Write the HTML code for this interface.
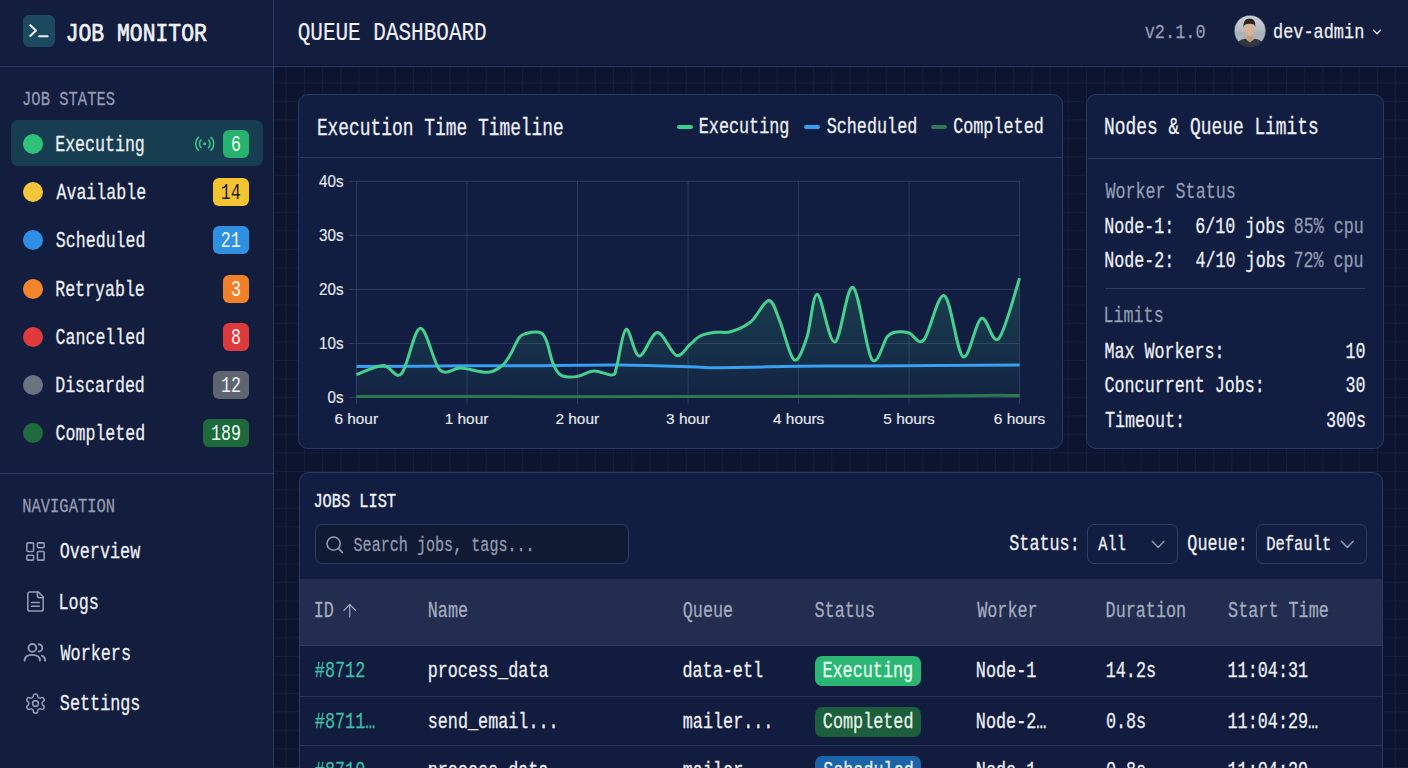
<!DOCTYPE html>
<html><head><meta charset="utf-8"><title>Job Monitor - Queue Dashboard</title>
<style>
html,body{margin:0;padding:0;}
body{width:1408px;height:768px;overflow:hidden;position:relative;background:#0d1430;font-family:"Liberation Mono",monospace;}
.t{position:absolute;white-space:pre;}
.b{position:absolute;}
</style></head><body>
<div class="b" style="left:274px;top:66px;width:1134px;height:702px;background-color:#0d1430;background-image:linear-gradient(to right,#151d3b 1px,transparent 1px),linear-gradient(to bottom,#151d3b 1px,transparent 1px);background-size:18.203px 18.5px;background-position:11.7px 16.4px"></div>
<div class="b" style="left:0.00px;top:0.00px;width:273.00px;height:768.00px;background:#131d3e;border-radius:0px;"></div>
<div class="b" style="left:273.00px;top:0.00px;width:1.00px;height:768.00px;background:#2a3a64;border-radius:0px;"></div>
<div class="b" style="left:274.00px;top:0.00px;width:1134.00px;height:65.00px;background:#131d3e;border-radius:0px;"></div>
<div class="b" style="left:0.00px;top:65.60px;width:1408.00px;height:1.00px;background:#2a3a64;border-radius:0px;"></div>
<div class="b" style="left:23.40px;top:15.30px;width:31.80px;height:31.80px;background:#1b4a60;border-radius:6px;"></div>
<svg class="b" style="left:23.40px;top:15.30px;" width="32" height="32" viewBox="0 0 32 32"><path d="M7.3 10.2 L13 15.6 L7.3 21" fill="none" stroke="#e8f4f8" stroke-width="2.1" stroke-linecap="round" stroke-linejoin="round"/><path d="M16.2 21.2 H24.6" stroke="#e8f4f8" stroke-width="2.1" stroke-linecap="round"/></svg>
<div class="t" style="left:65.66px;top:24.61px;font-family:'Liberation Mono', monospace;font-size:21.4px;line-height:21.4px;color:#eef1f7;font-weight:400;transform:scaleY(1.22);transform-origin:0 16.39px;-webkit-text-stroke:0.6px #eef1f7;">JOB MONITOR</div>
<div class="t" style="left:22.07px;top:94.13px;font-family:'Liberation Mono', monospace;font-size:15.5px;line-height:15.5px;color:#939cb1;font-weight:400;transform:scaleY(1.32);transform-origin:0 11.87px;-webkit-text-stroke:0.2px #939cb1;">JOB STATES</div>
<div class="b" style="left:11.00px;top:120.40px;width:251.50px;height:45.80px;background:#173d50;border-radius:7px;"></div>
<div class="b" style="left:23px;top:133.50px;width:20px;height:20px;border-radius:50%;background:#2fc27a"></div>
<div class="t" style="left:55.19px;top:138.68px;font-family:'Liberation Mono', monospace;font-size:16.6px;line-height:16.6px;color:#eef1f7;font-weight:400;transform:scaleY(1.3);transform-origin:0 12.72px;-webkit-text-stroke:0.2px #eef1f7;">Executing</div>
<div class="b" style="left:223.00px;top:129.50px;width:26.00px;height:28.00px;background:#27b36f;border-radius:6px;"></div>
<div class="t" style="left:230.95px;top:138.68px;font-family:'Liberation Mono', monospace;font-size:16.6px;line-height:16.6px;color:#eafff2;font-weight:400;transform:scaleY(1.3);transform-origin:0 12.72px;">6</div>
<div class="b" style="left:23px;top:182.00px;width:20px;height:20px;border-radius:50%;background:#f5c53a"></div>
<div class="t" style="left:56.50px;top:187.18px;font-family:'Liberation Mono', monospace;font-size:16.6px;line-height:16.6px;color:#eef1f7;font-weight:400;transform:scaleY(1.3);transform-origin:0 12.72px;-webkit-text-stroke:0.2px #eef1f7;">Available</div>
<div class="b" style="left:213.00px;top:178.00px;width:36.00px;height:28.00px;background:#f4c430;border-radius:6px;"></div>
<div class="t" style="left:220.86px;top:187.18px;font-family:'Liberation Mono', monospace;font-size:16.6px;line-height:16.6px;color:#1a1a1a;font-weight:400;transform:scaleY(1.3);transform-origin:0 12.72px;">14</div>
<div class="b" style="left:23px;top:230.30px;width:20px;height:20px;border-radius:50%;background:#2f8fe6"></div>
<div class="t" style="left:55.86px;top:235.48px;font-family:'Liberation Mono', monospace;font-size:16.6px;line-height:16.6px;color:#eef1f7;font-weight:400;transform:scaleY(1.3);transform-origin:0 12.72px;-webkit-text-stroke:0.2px #eef1f7;">Scheduled</div>
<div class="b" style="left:213.00px;top:226.30px;width:36.00px;height:28.00px;background:#2f8fe0;border-radius:6px;"></div>
<div class="t" style="left:220.86px;top:235.48px;font-family:'Liberation Mono', monospace;font-size:16.6px;line-height:16.6px;color:#f0f7ff;font-weight:400;transform:scaleY(1.3);transform-origin:0 12.72px;">21</div>
<div class="b" style="left:23px;top:278.60px;width:20px;height:20px;border-radius:50%;background:#f2852e"></div>
<div class="t" style="left:55.19px;top:283.78px;font-family:'Liberation Mono', monospace;font-size:16.6px;line-height:16.6px;color:#eef1f7;font-weight:400;transform:scaleY(1.3);transform-origin:0 12.72px;-webkit-text-stroke:0.2px #eef1f7;">Retryable</div>
<div class="b" style="left:223.00px;top:274.60px;width:26.00px;height:28.00px;background:#f0802a;border-radius:6px;"></div>
<div class="t" style="left:231.03px;top:283.78px;font-family:'Liberation Mono', monospace;font-size:16.6px;line-height:16.6px;color:#fff6ee;font-weight:400;transform:scaleY(1.3);transform-origin:0 12.72px;">3</div>
<div class="b" style="left:23px;top:327.00px;width:20px;height:20px;border-radius:50%;background:#e03a3e"></div>
<div class="t" style="left:55.58px;top:332.18px;font-family:'Liberation Mono', monospace;font-size:16.6px;line-height:16.6px;color:#eef1f7;font-weight:400;transform:scaleY(1.3);transform-origin:0 12.72px;-webkit-text-stroke:0.2px #eef1f7;">Cancelled</div>
<div class="b" style="left:223.00px;top:323.00px;width:26.00px;height:28.00px;background:#dc3a3d;border-radius:6px;"></div>
<div class="t" style="left:231.03px;top:332.18px;font-family:'Liberation Mono', monospace;font-size:16.6px;line-height:16.6px;color:#fff0f0;font-weight:400;transform:scaleY(1.3);transform-origin:0 12.72px;">8</div>
<div class="b" style="left:23px;top:375.20px;width:20px;height:20px;border-radius:50%;background:#6b7280"></div>
<div class="t" style="left:55.19px;top:380.38px;font-family:'Liberation Mono', monospace;font-size:16.6px;line-height:16.6px;color:#eef1f7;font-weight:400;transform:scaleY(1.3);transform-origin:0 12.72px;-webkit-text-stroke:0.2px #eef1f7;">Discarded</div>
<div class="b" style="left:213.00px;top:371.20px;width:36.00px;height:28.00px;background:#5f6570;border-radius:6px;"></div>
<div class="t" style="left:221.03px;top:380.38px;font-family:'Liberation Mono', monospace;font-size:16.6px;line-height:16.6px;color:#f0f2f5;font-weight:400;transform:scaleY(1.3);transform-origin:0 12.72px;">12</div>
<div class="b" style="left:23px;top:423.20px;width:20px;height:20px;border-radius:50%;background:#1f6b3e"></div>
<div class="t" style="left:55.58px;top:428.38px;font-family:'Liberation Mono', monospace;font-size:16.6px;line-height:16.6px;color:#eef1f7;font-weight:400;transform:scaleY(1.3);transform-origin:0 12.72px;-webkit-text-stroke:0.2px #eef1f7;">Completed</div>
<div class="b" style="left:203.00px;top:419.20px;width:46.00px;height:28.00px;background:#1e6a3d;border-radius:6px;"></div>
<div class="t" style="left:211.03px;top:428.38px;font-family:'Liberation Mono', monospace;font-size:16.6px;line-height:16.6px;color:#eafff2;font-weight:400;transform:scaleY(1.3);transform-origin:0 12.72px;">189</div>
<svg class="b" style="left:194.25px;top:133.05px" width="21.5" height="21.5" viewBox="0 0 24 24" fill="none" stroke="#3cc488" stroke-width="1.8" stroke-linecap="round" stroke-linejoin="round"><path d="M4.9 19.1C1 15.2 1 8.8 4.9 4.9"/><path d="M7.8 16.2c-2.3-2.3-2.3-6.1 0-8.5"/><circle cx="12" cy="12" r="0.9" fill="#3cc488"/><path d="M16.2 7.8c2.3 2.3 2.3 6.1 0 8.5"/><path d="M19.1 4.9C23 8.8 23 15.1 19.1 19.1"/></svg>
<div class="b" style="left:0.00px;top:472.50px;width:273.00px;height:1.00px;background:#2a3a64;border-radius:0px;"></div>
<div class="t" style="left:22.17px;top:501.33px;font-family:'Liberation Mono', monospace;font-size:15.5px;line-height:15.5px;color:#939cb1;font-weight:400;transform:scaleY(1.32);transform-origin:0 11.87px;-webkit-text-stroke:0.2px #939cb1;">NAVIGATION</div>
<svg class="b" style="left:24.00px;top:540.00px" width="23" height="23" viewBox="0 0 24 24" fill="none" stroke="#939cb1" stroke-width="1.6" stroke-linecap="round" stroke-linejoin="round"><rect width="7" height="9" x="3" y="3" rx="1"/><rect width="7" height="5" x="14" y="3" rx="1"/><rect width="7" height="9" x="14" y="12" rx="1"/><rect width="7" height="5" x="3" y="16" rx="1"/></svg>
<div class="t" style="left:59.66px;top:546.33px;font-family:'Liberation Mono', monospace;font-size:16.8px;line-height:16.8px;color:#eef1f7;font-weight:400;transform:scaleY(1.3);transform-origin:0 12.87px;-webkit-text-stroke:0.2px #eef1f7;">Overview</div>
<svg class="b" style="left:24.00px;top:590.30px" width="23" height="23" viewBox="0 0 24 24" fill="none" stroke="#939cb1" stroke-width="1.6" stroke-linecap="round" stroke-linejoin="round"><path d="M15 2H6a2 2 0 0 0-2 2v16a2 2 0 0 0 2 2h12a2 2 0 0 0 2-2V7Z"/><path d="M14 2v4a2 2 0 0 0 2 2h4"/><path d="M16 13H8"/><path d="M16 17H8"/></svg>
<div class="t" style="left:58.56px;top:596.63px;font-family:'Liberation Mono', monospace;font-size:16.8px;line-height:16.8px;color:#eef1f7;font-weight:400;transform:scaleY(1.3);transform-origin:0 12.87px;-webkit-text-stroke:0.2px #eef1f7;">Logs</div>
<svg class="b" style="left:0.00px;top:0.00px;" width="60" height="768" viewBox="0 0 60 768"><g fill="none" stroke="#939cb1" stroke-width="1.9" stroke-linecap="round"><circle cx="32.4" cy="647.9" r="3.9"/><path d="M38.7,644.3 A3.6,3.6 0 0 1 38.7,651.5"/><path d="M24.6,660.6 C24.6,656.6 27.6,654.9 32.3,654.9 C37,654.9 40,656.6 40,660.6"/><path d="M41.9,655.6 C44,656.5 45.2,658.3 45.2,660.6"/></g></svg>
<div class="t" style="left:60.50px;top:647.53px;font-family:'Liberation Mono', monospace;font-size:16.8px;line-height:16.8px;color:#eef1f7;font-weight:400;transform:scaleY(1.3);transform-origin:0 12.87px;-webkit-text-stroke:0.2px #eef1f7;">Workers</div>
<svg class="b" style="left:24.00px;top:691.70px" width="23" height="23" viewBox="0 0 24 24" fill="none" stroke="#939cb1" stroke-width="1.6" stroke-linecap="round" stroke-linejoin="round"><path d="M12.22 2h-.44a2 2 0 0 0-2 2v.18a2 2 0 0 1-1 1.73l-.43.25a2 2 0 0 1-2 0l-.15-.08a2 2 0 0 0-2.73.73l-.22.38a2 2 0 0 0 .73 2.73l.15.1a2 2 0 0 1 1 1.72v.51a2 2 0 0 1-1 1.74l-.15.09a2 2 0 0 0-.73 2.73l.22.38a2 2 0 0 0 2.73.73l.15-.08a2 2 0 0 1 2 0l.43.25a2 2 0 0 1 1 1.73V20a2 2 0 0 0 2 2h.44a2 2 0 0 0 2-2v-.18a2 2 0 0 1 1-1.73l.43-.25a2 2 0 0 1 2 0l.15.08a2 2 0 0 0 2.73-.73l.22-.39a2 2 0 0 0-.73-2.73l-.15-.08a2 2 0 0 1-1-1.74v-.5a2 2 0 0 1 1-1.74l.15-.09a2 2 0 0 0 .73-2.73l-.22-.38a2 2 0 0 0-2.73-.73l-.15.08a2 2 0 0 1-2 0l-.43-.25a2 2 0 0 1-1-1.73V4a2 2 0 0 0-2-2z"/><circle cx="12" cy="12" r="3"/></svg>
<div class="t" style="left:59.85px;top:698.23px;font-family:'Liberation Mono', monospace;font-size:16.8px;line-height:16.8px;color:#eef1f7;font-weight:400;transform:scaleY(1.3);transform-origin:0 12.87px;-webkit-text-stroke:0.2px #eef1f7;">Settings</div>
<div class="t" style="left:297.70px;top:24.41px;font-family:'Liberation Mono', monospace;font-size:21px;line-height:21px;color:#eef1f7;font-weight:400;transform:scaleY(1.22);transform-origin:0 16.09px;-webkit-text-stroke:0.15px #eef1f7;">QUEUE DASHBOARD</div>
<div class="t" style="left:1144.73px;top:26.35px;font-family:'Liberation Mono', monospace;font-size:16.9px;line-height:16.9px;color:#939cb1;font-weight:400;transform:scaleY(1.25);transform-origin:0 12.95px;-webkit-text-stroke:0.2px #939cb1;">v2.1.0</div>
<svg class="b" style="left:1233.60px;top:15.15px;" width="32" height="32" viewBox="0 0 32 32"><defs><clipPath id="av"><circle cx="16" cy="16" r="15.85"/></clipPath><linearGradient id="avbg" x1="0" y1="0" x2="0" y2="1"><stop offset="0" stop-color="#cdd2d7"/><stop offset="0.45" stop-color="#b9c0c5"/><stop offset="0.55" stop-color="#a9b1b6"/><stop offset="1" stop-color="#b4bbc0"/></linearGradient></defs>
<g clip-path="url(#av)"><rect width="32" height="32" fill="url(#avbg)"/>
<path d="M1 33 C2 27.5 6 24.5 11.5 23.8 L16 27 L20.5 23.8 C26 24.5 30 27.5 31 33 Z" fill="#34373d"/>
<path d="M13 20 L19 20 L19.5 24.5 L16 27.5 L12.5 24.5 Z" fill="#c49a82"/>
<ellipse cx="15.4" cy="14" rx="5.6" ry="7.2" fill="#d7b29b"/>
<path d="M9.5 12.5 C9 6.5 11.5 3.6 15.5 3.6 C19.8 3.6 22 6.5 21.3 12 C20.6 9.6 19.5 8.8 15.5 8.8 C11.6 8.8 10.5 9.8 9.5 12.5 Z" fill="#2b2522"/></g>
<circle cx="16" cy="16" r="15.85" fill="none" stroke="#0b1330" stroke-width="0.8" opacity="0.6"/></svg>
<div class="t" style="left:1273.06px;top:26.35px;font-family:'Liberation Mono', monospace;font-size:16.9px;line-height:16.9px;color:#eef1f7;font-weight:400;transform:scaleY(1.25);transform-origin:0 12.95px;-webkit-text-stroke:0.2px #eef1f7;">dev-admin</div>
<svg class="b" style="left:1370.00px;top:24.50px" width="14" height="14" viewBox="0 0 24 24" fill="none" stroke="#eef1f7" stroke-width="2.2" stroke-linecap="round" stroke-linejoin="round"><path d="m6 9 6 6 6-6"/></svg>
<div class="b" style="left:298.00px;top:94.00px;width:765.00px;height:355.00px;background:#121e41;border:1px solid #2a3a64;box-sizing:border-box;border-radius:10px;"></div>
<div class="b" style="left:299.50px;top:157.20px;width:762.00px;height:1.00px;background:#2a3b64;border-radius:0px;"></div>
<div class="t" style="left:316.88px;top:121.59px;font-family:'Liberation Mono', monospace;font-size:17.9px;line-height:17.9px;color:#eef1f7;font-weight:400;transform:scaleY(1.32);transform-origin:0 13.71px;-webkit-text-stroke:0.2px #eef1f7;">Execution Time Timeline</div>
<div class="b" style="left:676.80px;top:124.70px;width:16.00px;height:4.00px;background:#3ccf8a;border-radius:2px;"></div>
<div class="t" style="left:698.77px;top:121.43px;font-family:'Liberation Mono', monospace;font-size:16.8px;line-height:16.8px;color:#eef1f7;font-weight:400;transform:scaleY(1.3);transform-origin:0 12.87px;-webkit-text-stroke:0.2px #eef1f7;">Executing</div>
<div class="b" style="left:804.00px;top:124.70px;width:16.00px;height:4.00px;background:#3a9ff0;border-radius:2px;"></div>
<div class="t" style="left:826.65px;top:121.43px;font-family:'Liberation Mono', monospace;font-size:16.8px;line-height:16.8px;color:#eef1f7;font-weight:400;transform:scaleY(1.3);transform-origin:0 12.87px;-webkit-text-stroke:0.2px #eef1f7;">Scheduled</div>
<div class="b" style="left:930.80px;top:124.70px;width:16.00px;height:4.00px;background:#2b7a4e;border-radius:2px;"></div>
<div class="t" style="left:953.17px;top:121.43px;font-family:'Liberation Mono', monospace;font-size:16.8px;line-height:16.8px;color:#eef1f7;font-weight:400;transform:scaleY(1.3);transform-origin:0 12.87px;-webkit-text-stroke:0.2px #eef1f7;">Completed</div>
<div class="t" style="left:327.50px;top:390.08px;font-family:'Liberation Sans', sans-serif;font-size:15.2px;line-height:15.2px;color:#e6e9f0;font-weight:400;transform:scaleY(1.03);transform-origin:0 12.92px;-webkit-text-stroke:0.15px #e6e9f0;">0s</div>
<div class="t" style="left:319.04px;top:336.03px;font-family:'Liberation Sans', sans-serif;font-size:15.2px;line-height:15.2px;color:#e6e9f0;font-weight:400;transform:scaleY(1.03);transform-origin:0 12.92px;-webkit-text-stroke:0.15px #e6e9f0;">10s</div>
<div class="t" style="left:319.04px;top:281.98px;font-family:'Liberation Sans', sans-serif;font-size:15.2px;line-height:15.2px;color:#e6e9f0;font-weight:400;transform:scaleY(1.03);transform-origin:0 12.92px;-webkit-text-stroke:0.15px #e6e9f0;">20s</div>
<div class="t" style="left:319.04px;top:227.93px;font-family:'Liberation Sans', sans-serif;font-size:15.2px;line-height:15.2px;color:#e6e9f0;font-weight:400;transform:scaleY(1.03);transform-origin:0 12.92px;-webkit-text-stroke:0.15px #e6e9f0;">30s</div>
<div class="t" style="left:319.04px;top:173.88px;font-family:'Liberation Sans', sans-serif;font-size:15.2px;line-height:15.2px;color:#e6e9f0;font-weight:400;transform:scaleY(1.03);transform-origin:0 12.92px;-webkit-text-stroke:0.15px #e6e9f0;">40s</div>
<div class="t" style="left:334.40px;top:411.01px;font-family:'Liberation Sans', sans-serif;font-size:15.4px;line-height:15.4px;color:#e6e9f0;font-weight:400;-webkit-text-stroke:0.15px #e6e9f0;">6 hour</div>
<div class="t" style="left:444.73px;top:411.01px;font-family:'Liberation Sans', sans-serif;font-size:15.4px;line-height:15.4px;color:#e6e9f0;font-weight:400;-webkit-text-stroke:0.15px #e6e9f0;">1 hour</div>
<div class="t" style="left:555.44px;top:411.01px;font-family:'Liberation Sans', sans-serif;font-size:15.4px;line-height:15.4px;color:#e6e9f0;font-weight:400;-webkit-text-stroke:0.15px #e6e9f0;">2 hour</div>
<div class="t" style="left:666.05px;top:411.01px;font-family:'Liberation Sans', sans-serif;font-size:15.4px;line-height:15.4px;color:#e6e9f0;font-weight:400;-webkit-text-stroke:0.15px #e6e9f0;">3 hour</div>
<div class="t" style="left:772.99px;top:411.01px;font-family:'Liberation Sans', sans-serif;font-size:15.4px;line-height:15.4px;color:#e6e9f0;font-weight:400;-webkit-text-stroke:0.15px #e6e9f0;">4 hours</div>
<div class="t" style="left:883.37px;top:411.01px;font-family:'Liberation Sans', sans-serif;font-size:15.4px;line-height:15.4px;color:#e6e9f0;font-weight:400;-webkit-text-stroke:0.15px #e6e9f0;">5 hours</div>
<div class="t" style="left:993.80px;top:411.01px;font-family:'Liberation Sans', sans-serif;font-size:15.4px;line-height:15.4px;color:#e6e9f0;font-weight:400;-webkit-text-stroke:0.15px #e6e9f0;">6 hours</div>
<svg class="b" style="left:0.00px;top:0.00px;" width="1408" height="768" viewBox="0 0 1408 768"><line x1="349" y1="397.50" x2="1020.10" y2="397.50" stroke="#2c3a5e" stroke-width="1"/><line x1="349" y1="343.45" x2="1020.10" y2="343.45" stroke="#2c3a5e" stroke-width="1"/><line x1="349" y1="289.40" x2="1020.10" y2="289.40" stroke="#2c3a5e" stroke-width="1"/><line x1="349" y1="235.35" x2="1020.10" y2="235.35" stroke="#2c3a5e" stroke-width="1"/><line x1="349" y1="181.30" x2="1020.10" y2="181.30" stroke="#2c3a5e" stroke-width="1"/><line x1="356.50" y1="181.30" x2="356.50" y2="403.8" stroke="#2c3a5e" stroke-width="1"/><line x1="467.02" y1="181.30" x2="467.02" y2="403.8" stroke="#2c3a5e" stroke-width="1"/><line x1="577.53" y1="181.30" x2="577.53" y2="403.8" stroke="#2c3a5e" stroke-width="1"/><line x1="688.05" y1="181.30" x2="688.05" y2="403.8" stroke="#2c3a5e" stroke-width="1"/><line x1="798.57" y1="181.30" x2="798.57" y2="403.8" stroke="#2c3a5e" stroke-width="1"/><line x1="909.08" y1="181.30" x2="909.08" y2="403.8" stroke="#2c3a5e" stroke-width="1"/><line x1="1019.60" y1="181.30" x2="1019.60" y2="403.8" stroke="#2c3a5e" stroke-width="1"/><defs><linearGradient id="fillg" x1="0" y1="278" x2="0" y2="397.5" gradientUnits="userSpaceOnUse"><stop offset="0" stop-color="#3ccf8a" stop-opacity="0.2"/><stop offset="1" stop-color="#3ccf8a" stop-opacity="0.03"/></linearGradient></defs><path d="M356.50,374.50 C360.95,372.98 375.72,365.52 383.20,365.40 C390.68,365.28 395.22,380.00 401.40,373.80 C407.58,367.60 413.88,328.85 420.30,328.20 C426.72,327.55 433.17,363.27 439.90,369.90 C446.63,376.53 452.68,367.60 460.70,368.00 C468.72,368.40 481.03,372.77 488.00,372.30 C494.97,371.83 498.70,368.28 502.50,365.20 C506.30,362.12 508.02,358.40 510.80,353.80 C513.58,349.20 516.50,341.03 519.20,337.60 C521.90,334.17 524.05,334.15 527.00,333.20 C529.95,332.25 534.32,331.80 536.90,331.90 C539.48,332.00 540.77,331.90 542.50,333.80 C544.23,335.70 545.63,338.60 547.30,343.30 C548.97,348.00 550.58,356.97 552.50,362.00 C554.42,367.03 556.55,371.05 558.80,373.50 C561.05,375.95 562.72,376.27 566.00,376.70 C569.28,377.13 573.80,377.05 578.50,376.10 C583.20,375.15 588.53,371.20 594.20,371.00 C599.87,370.80 608.70,375.88 612.50,374.90 C616.30,373.92 614.73,372.70 617.00,365.10 C619.27,357.50 622.40,330.82 626.10,329.30 C629.80,327.78 633.98,355.45 639.20,356.00 C644.42,356.55 651.22,332.70 657.40,332.60 C663.58,332.50 670.87,353.42 676.30,355.40 C681.73,357.38 686.02,347.73 690.00,344.50 C693.98,341.27 695.97,338.03 700.20,336.00 C704.43,333.97 710.33,333.00 715.40,332.30 C720.47,331.60 724.67,333.58 730.60,331.80 C736.53,330.02 744.65,326.82 751.00,321.60 C757.35,316.38 763.92,300.63 768.70,300.50 C773.48,300.37 775.47,310.93 779.70,320.80 C783.93,330.67 789.58,356.88 794.10,359.70 C798.62,362.52 802.93,348.55 806.80,337.70 C810.67,326.85 812.63,293.88 817.30,294.60 C821.97,295.32 828.87,343.20 834.80,342.00 C840.73,340.80 846.72,284.50 852.90,287.40 C859.08,290.30 866.15,351.20 871.90,359.40 C877.65,367.60 883.30,341.17 887.40,336.60 C891.50,332.03 892.87,332.60 896.50,332.00 C900.13,331.40 904.65,331.68 909.20,333.00 C913.75,334.32 917.95,346.13 923.80,339.90 C929.65,333.67 937.77,292.80 944.30,295.60 C950.83,298.40 956.83,352.90 963.00,356.70 C969.17,360.50 975.37,321.38 981.30,318.40 C987.23,315.42 992.22,345.50 998.60,338.80 C1004.98,332.10 1016.10,288.30 1019.60,278.20 L1019.60,397.50 L356.50,397.50 Z" fill="url(#fillg)"/><path d="M356.50,396.60 C413.75,396.60 609.42,396.67 700.00,396.60 C790.58,396.53 853.33,396.40 900.00,396.20 C946.67,396.00 960.07,395.53 980.00,395.40 C999.93,395.27 1013.00,395.40 1019.60,395.40" fill="none" stroke="#2b7a4e" stroke-width="3"/><path d="M356.50,366.60 C374.92,366.47 439.75,365.93 467.00,365.80 C494.25,365.67 494.50,365.93 520.00,365.80 C545.50,365.67 590.00,364.77 620.00,365.00 C650.00,365.23 683.33,366.73 700.00,367.20 C716.67,367.67 703.33,367.97 720.00,367.80 C736.67,367.63 775.00,366.50 800.00,366.20 C825.00,365.90 833.40,366.20 870.00,366.00 C906.60,365.80 994.67,365.17 1019.60,365.00" fill="none" stroke="#3a9ff0" stroke-width="3"/><path d="M356.50,374.50 C360.95,372.98 375.72,365.52 383.20,365.40 C390.68,365.28 395.22,380.00 401.40,373.80 C407.58,367.60 413.88,328.85 420.30,328.20 C426.72,327.55 433.17,363.27 439.90,369.90 C446.63,376.53 452.68,367.60 460.70,368.00 C468.72,368.40 481.03,372.77 488.00,372.30 C494.97,371.83 498.70,368.28 502.50,365.20 C506.30,362.12 508.02,358.40 510.80,353.80 C513.58,349.20 516.50,341.03 519.20,337.60 C521.90,334.17 524.05,334.15 527.00,333.20 C529.95,332.25 534.32,331.80 536.90,331.90 C539.48,332.00 540.77,331.90 542.50,333.80 C544.23,335.70 545.63,338.60 547.30,343.30 C548.97,348.00 550.58,356.97 552.50,362.00 C554.42,367.03 556.55,371.05 558.80,373.50 C561.05,375.95 562.72,376.27 566.00,376.70 C569.28,377.13 573.80,377.05 578.50,376.10 C583.20,375.15 588.53,371.20 594.20,371.00 C599.87,370.80 608.70,375.88 612.50,374.90 C616.30,373.92 614.73,372.70 617.00,365.10 C619.27,357.50 622.40,330.82 626.10,329.30 C629.80,327.78 633.98,355.45 639.20,356.00 C644.42,356.55 651.22,332.70 657.40,332.60 C663.58,332.50 670.87,353.42 676.30,355.40 C681.73,357.38 686.02,347.73 690.00,344.50 C693.98,341.27 695.97,338.03 700.20,336.00 C704.43,333.97 710.33,333.00 715.40,332.30 C720.47,331.60 724.67,333.58 730.60,331.80 C736.53,330.02 744.65,326.82 751.00,321.60 C757.35,316.38 763.92,300.63 768.70,300.50 C773.48,300.37 775.47,310.93 779.70,320.80 C783.93,330.67 789.58,356.88 794.10,359.70 C798.62,362.52 802.93,348.55 806.80,337.70 C810.67,326.85 812.63,293.88 817.30,294.60 C821.97,295.32 828.87,343.20 834.80,342.00 C840.73,340.80 846.72,284.50 852.90,287.40 C859.08,290.30 866.15,351.20 871.90,359.40 C877.65,367.60 883.30,341.17 887.40,336.60 C891.50,332.03 892.87,332.60 896.50,332.00 C900.13,331.40 904.65,331.68 909.20,333.00 C913.75,334.32 917.95,346.13 923.80,339.90 C929.65,333.67 937.77,292.80 944.30,295.60 C950.83,298.40 956.83,352.90 963.00,356.70 C969.17,360.50 975.37,321.38 981.30,318.40 C987.23,315.42 992.22,345.50 998.60,338.80 C1004.98,332.10 1016.10,288.30 1019.60,278.20" fill="none" stroke="#45d08e" stroke-width="3" stroke-linejoin="round"/></svg>
<div class="b" style="left:1086.00px;top:94.00px;width:298.00px;height:355.00px;background:#121e41;border:1px solid #2a3a64;box-sizing:border-box;border-radius:10px;"></div>
<div class="b" style="left:1087.60px;top:157.50px;width:294.80px;height:1.00px;background:#2a3b64;border-radius:0px;"></div>
<div class="t" style="left:1104.08px;top:121.29px;font-family:'Liberation Mono', monospace;font-size:17.9px;line-height:17.9px;color:#eef1f7;font-weight:400;transform:scaleY(1.32);transform-origin:0 13.71px;-webkit-text-stroke:0.2px #eef1f7;">Nodes &amp; Queue Limits</div>
<div class="t" style="left:1105.50px;top:185.51px;font-family:'Liberation Mono', monospace;font-size:16.7px;line-height:16.7px;color:#939cb1;font-weight:400;transform:scaleY(1.3);transform-origin:0 12.79px;-webkit-text-stroke:0.2px #939cb1;">Worker Status</div>
<div class="t" style="left:1104.18px;top:220.51px;font-family:'Liberation Mono', monospace;font-size:16.7px;line-height:16.7px;color:#eef1f7;font-weight:400;transform:scaleY(1.3);transform-origin:0 12.79px;-webkit-text-stroke:0.2px #eef1f7;">Node-1:</div>
<div class="t" style="left:1195.17px;top:220.51px;font-family:'Liberation Mono', monospace;font-size:16.7px;line-height:16.7px;color:#eef1f7;font-weight:400;transform:scaleY(1.3);transform-origin:0 12.79px;-webkit-text-stroke:0.2px #eef1f7;">6/10 jobs</div>
<div class="t" style="left:1293.72px;top:220.51px;font-family:'Liberation Mono', monospace;font-size:16.7px;line-height:16.7px;color:#939cb1;font-weight:400;transform:scaleY(1.3);transform-origin:0 12.79px;-webkit-text-stroke:0.2px #939cb1;">85% cpu</div>
<div class="t" style="left:1104.18px;top:255.31px;font-family:'Liberation Mono', monospace;font-size:16.7px;line-height:16.7px;color:#eef1f7;font-weight:400;transform:scaleY(1.3);transform-origin:0 12.79px;-webkit-text-stroke:0.2px #eef1f7;">Node-2:</div>
<div class="t" style="left:1195.56px;top:255.31px;font-family:'Liberation Mono', monospace;font-size:16.7px;line-height:16.7px;color:#eef1f7;font-weight:400;transform:scaleY(1.3);transform-origin:0 12.79px;-webkit-text-stroke:0.2px #eef1f7;">4/10 jobs</div>
<div class="t" style="left:1293.51px;top:255.31px;font-family:'Liberation Mono', monospace;font-size:16.7px;line-height:16.7px;color:#939cb1;font-weight:400;transform:scaleY(1.3);transform-origin:0 12.79px;-webkit-text-stroke:0.2px #939cb1;">72% cpu</div>
<div class="b" style="left:1105.00px;top:287.60px;width:260.00px;height:1.00px;background:#2a3b64;border-radius:0px;"></div>
<div class="t" style="left:1103.57px;top:310.41px;font-family:'Liberation Mono', monospace;font-size:16.7px;line-height:16.7px;color:#939cb1;font-weight:400;transform:scaleY(1.3);transform-origin:0 12.79px;-webkit-text-stroke:0.2px #939cb1;">Limits</div>
<div class="t" style="left:1104.45px;top:345.61px;font-family:'Liberation Mono', monospace;font-size:16.7px;line-height:16.7px;color:#eef1f7;font-weight:400;transform:scaleY(1.3);transform-origin:0 12.79px;-webkit-text-stroke:0.2px #eef1f7;">Max Workers:</div>
<div class="t" style="left:1345.58px;top:345.61px;font-family:'Liberation Mono', monospace;font-size:16.7px;line-height:16.7px;color:#eef1f7;font-weight:400;transform:scaleY(1.3);transform-origin:0 12.79px;-webkit-text-stroke:0.2px #eef1f7;">10</div>
<div class="t" style="left:1104.58px;top:380.21px;font-family:'Liberation Mono', monospace;font-size:16.7px;line-height:16.7px;color:#eef1f7;font-weight:400;transform:scaleY(1.3);transform-origin:0 12.79px;-webkit-text-stroke:0.2px #eef1f7;">Concurrent Jobs:</div>
<div class="t" style="left:1345.58px;top:380.21px;font-family:'Liberation Mono', monospace;font-size:16.7px;line-height:16.7px;color:#eef1f7;font-weight:400;transform:scaleY(1.3);transform-origin:0 12.79px;-webkit-text-stroke:0.2px #eef1f7;">30</div>
<div class="t" style="left:1104.88px;top:414.91px;font-family:'Liberation Mono', monospace;font-size:16.7px;line-height:16.7px;color:#eef1f7;font-weight:400;transform:scaleY(1.3);transform-origin:0 12.79px;-webkit-text-stroke:0.2px #eef1f7;">Timeout:</div>
<div class="t" style="left:1325.89px;top:414.91px;font-family:'Liberation Mono', monospace;font-size:16.7px;line-height:16.7px;color:#eef1f7;font-weight:400;transform:scaleY(1.3);transform-origin:0 12.79px;-webkit-text-stroke:0.2px #eef1f7;">300s</div>
<div class="b" style="left:299.00px;top:472.00px;width:1084.00px;height:328.00px;background:#121e41;border:1px solid #2a3a64;box-sizing:border-box;border-radius:10px;"></div>
<div class="t" style="left:313.39px;top:495.98px;font-family:'Liberation Mono', monospace;font-size:15.3px;line-height:15.3px;color:#eef1f7;font-weight:400;transform:scaleY(1.32);transform-origin:0 11.72px;-webkit-text-stroke:0.3px #eef1f7;">JOBS LIST</div>
<div class="b" style="left:315.00px;top:524.00px;width:314.00px;height:40.00px;background:#111a33;border:1px solid #2c3c66;box-sizing:border-box;border-radius:7px;"></div>
<svg class="b" style="left:324.00px;top:534.00px" width="21" height="21" viewBox="0 0 24 24" fill="none" stroke="#939cb1" stroke-width="1.8" stroke-linecap="round" stroke-linejoin="round"><circle cx="11" cy="11" r="7.5"/><path d="m21 21-4.3-4.3"/></svg>
<div class="t" style="left:353.52px;top:539.73px;font-family:'Liberation Mono', monospace;font-size:15.1px;line-height:15.1px;color:#939cb1;font-weight:400;transform:scaleY(1.3);transform-origin:0 11.57px;-webkit-text-stroke:0.2px #939cb1;">Search jobs, tags...</div>
<div class="t" style="left:1009.25px;top:538.13px;font-family:'Liberation Mono', monospace;font-size:16.8px;line-height:16.8px;color:#eef1f7;font-weight:400;transform:scaleY(1.3);transform-origin:0 12.87px;-webkit-text-stroke:0.2px #eef1f7;">Status:</div>
<div class="b" style="left:1087.00px;top:524.00px;width:91.00px;height:40.00px;background:transparent;border:1px solid #2c3c66;box-sizing:border-box;border-radius:7px;"></div>
<div class="t" style="left:1098.30px;top:539.28px;font-family:'Liberation Mono', monospace;font-size:15.3px;line-height:15.3px;color:#eef1f7;font-weight:400;transform:scaleY(1.3);transform-origin:0 11.72px;-webkit-text-stroke:0.2px #eef1f7;">All</div>
<svg class="b" style="left:0.00px;top:0.00px;" width="1408" height="768" viewBox="0 0 1408 768"><path d="M1152.3,541.3 L1158.15,547.6 L1164,541.3" fill="none" stroke="#939cb1" stroke-width="1.4" stroke-linecap="round" stroke-linejoin="round"/></svg>
<div class="t" style="left:1187.36px;top:538.13px;font-family:'Liberation Mono', monospace;font-size:16.8px;line-height:16.8px;color:#eef1f7;font-weight:400;transform:scaleY(1.3);transform-origin:0 12.87px;-webkit-text-stroke:0.2px #eef1f7;">Queue:</div>
<div class="b" style="left:1256.00px;top:524.00px;width:111.00px;height:40.00px;background:transparent;border:1px solid #2c3c66;box-sizing:border-box;border-radius:7px;"></div>
<div class="t" style="left:1266.17px;top:539.13px;font-family:'Liberation Mono', monospace;font-size:15.5px;line-height:15.5px;color:#eef1f7;font-weight:400;transform:scaleY(1.3);transform-origin:0 11.87px;-webkit-text-stroke:0.2px #eef1f7;">Default</div>
<svg class="b" style="left:0.00px;top:0.00px;" width="1408" height="768" viewBox="0 0 1408 768"><path d="M1341.4,541.2 L1347.3,547.5 L1353.2,541.2" fill="none" stroke="#939cb1" stroke-width="1.4" stroke-linecap="round" stroke-linejoin="round"/></svg>
<div class="b" style="left:300.00px;top:579.00px;width:1081.80px;height:66.00px;background:#222d4f;border-radius:0px;"></div>
<div class="b" style="left:300.00px;top:644.50px;width:1081.80px;height:1.00px;background:#2c3b62;border-radius:0px;"></div>
<div class="t" style="left:313.64px;top:605.33px;font-family:'Liberation Mono', monospace;font-size:16.8px;line-height:16.8px;color:#a3acbf;font-weight:400;transform:scaleY(1.3);transform-origin:0 12.87px;-webkit-text-stroke:0.2px #a3acbf;">ID</div>
<div class="t" style="left:427.77px;top:605.33px;font-family:'Liberation Mono', monospace;font-size:16.8px;line-height:16.8px;color:#a3acbf;font-weight:400;transform:scaleY(1.3);transform-origin:0 12.87px;-webkit-text-stroke:0.2px #a3acbf;">Name</div>
<div class="t" style="left:682.76px;top:605.33px;font-family:'Liberation Mono', monospace;font-size:16.8px;line-height:16.8px;color:#a3acbf;font-weight:400;transform:scaleY(1.3);transform-origin:0 12.87px;-webkit-text-stroke:0.2px #a3acbf;">Queue</div>
<div class="t" style="left:814.55px;top:605.33px;font-family:'Liberation Mono', monospace;font-size:16.8px;line-height:16.8px;color:#a3acbf;font-weight:400;transform:scaleY(1.3);transform-origin:0 12.87px;-webkit-text-stroke:0.2px #a3acbf;">Status</div>
<div class="t" style="left:977.20px;top:605.33px;font-family:'Liberation Mono', monospace;font-size:16.8px;line-height:16.8px;color:#a3acbf;font-weight:400;transform:scaleY(1.3);transform-origin:0 12.87px;-webkit-text-stroke:0.2px #a3acbf;">Worker</div>
<div class="t" style="left:1105.57px;top:605.33px;font-family:'Liberation Mono', monospace;font-size:16.8px;line-height:16.8px;color:#a3acbf;font-weight:400;transform:scaleY(1.3);transform-origin:0 12.87px;-webkit-text-stroke:0.2px #a3acbf;">Duration</div>
<div class="t" style="left:1228.10px;top:605.33px;font-family:'Liberation Mono', monospace;font-size:16.8px;line-height:16.8px;color:#a3acbf;font-weight:400;transform:scaleY(1.3);transform-origin:0 12.87px;-webkit-text-stroke:0.2px #a3acbf;">Start Time</div>
<svg class="b" style="left:338.65px;top:599.55px" width="21.5" height="21.5" viewBox="0 0 24 24" fill="none" stroke="#a3acbf" stroke-width="1.3" stroke-linecap="round" stroke-linejoin="round"><path d="m5.5 11.5 6.5-6.5 6.5 6.5"/><path d="M12 19V5"/></svg>
<div class="b" style="left:300.00px;top:645.50px;width:1081.80px;height:122.50px;background:#121c3e;border-radius:0px;"></div>
<div class="b" style="left:300.00px;top:696.00px;width:1081.80px;height:1.00px;background:#26345a;border-radius:0px;"></div>
<div class="b" style="left:300.00px;top:745.30px;width:1081.80px;height:1.00px;background:#26345a;border-radius:0px;"></div>
<div class="t" style="left:314.86px;top:665.33px;font-family:'Liberation Mono', monospace;font-size:16.8px;line-height:16.8px;color:#3fbfa4;font-weight:400;transform:scaleY(1.3);transform-origin:0 12.87px;-webkit-text-stroke:0.2px #3fbfa4;">#8712</div>
<div class="t" style="left:427.63px;top:665.33px;font-family:'Liberation Mono', monospace;font-size:16.8px;line-height:16.8px;color:#eef1f7;font-weight:400;transform:scaleY(1.3);transform-origin:0 12.87px;-webkit-text-stroke:0.2px #eef1f7;">process_data</div>
<div class="t" style="left:682.47px;top:665.33px;font-family:'Liberation Mono', monospace;font-size:16.8px;line-height:16.8px;color:#eef1f7;font-weight:400;transform:scaleY(1.3);transform-origin:0 12.87px;-webkit-text-stroke:0.2px #eef1f7;">data-etl</div>
<div class="b" style="left:815.00px;top:656.20px;width:105.80px;height:29.60px;background:#2bb673;border-radius:7px;"></div>
<div class="t" style="left:822.47px;top:665.33px;font-family:'Liberation Mono', monospace;font-size:16.8px;line-height:16.8px;color:#eafff4;font-weight:400;transform:scaleY(1.3);transform-origin:0 12.87px;-webkit-text-stroke:0.2px #eafff4;">Executing</div>
<div class="t" style="left:975.87px;top:665.33px;font-family:'Liberation Mono', monospace;font-size:16.8px;line-height:16.8px;color:#eef1f7;font-weight:400;transform:scaleY(1.3);transform-origin:0 12.87px;-webkit-text-stroke:0.2px #eef1f7;">Node-1</div>
<div class="t" style="left:1105.69px;top:665.33px;font-family:'Liberation Mono', monospace;font-size:16.8px;line-height:16.8px;color:#eef1f7;font-weight:400;transform:scaleY(1.3);transform-origin:0 12.87px;-webkit-text-stroke:0.2px #eef1f7;">14.2s</div>
<div class="t" style="left:1227.54px;top:665.33px;font-family:'Liberation Mono', monospace;font-size:16.8px;line-height:16.8px;color:#eef1f7;font-weight:400;transform:scaleY(1.3);transform-origin:0 12.87px;-webkit-text-stroke:0.2px #eef1f7;">11:04:31</div>
<div class="t" style="left:314.86px;top:715.63px;font-family:'Liberation Mono', monospace;font-size:16.8px;line-height:16.8px;color:#3fbfa4;font-weight:400;transform:scaleY(1.3);transform-origin:0 12.87px;-webkit-text-stroke:0.2px #3fbfa4;">#8711…</div>
<div class="t" style="left:427.73px;top:715.63px;font-family:'Liberation Mono', monospace;font-size:16.8px;line-height:16.8px;color:#eef1f7;font-weight:400;transform:scaleY(1.3);transform-origin:0 12.87px;-webkit-text-stroke:0.2px #eef1f7;">send_email...</div>
<div class="t" style="left:682.79px;top:715.63px;font-family:'Liberation Mono', monospace;font-size:16.8px;line-height:16.8px;color:#eef1f7;font-weight:400;transform:scaleY(1.3);transform-origin:0 12.87px;-webkit-text-stroke:0.2px #eef1f7;">mailer...</div>
<div class="b" style="left:815.00px;top:707.20px;width:105.80px;height:29.60px;background:#1d5e3c;border-radius:7px;"></div>
<div class="t" style="left:822.87px;top:715.63px;font-family:'Liberation Mono', monospace;font-size:16.8px;line-height:16.8px;color:#e4f5ea;font-weight:400;transform:scaleY(1.3);transform-origin:0 12.87px;-webkit-text-stroke:0.2px #e4f5ea;">Completed</div>
<div class="t" style="left:975.87px;top:715.63px;font-family:'Liberation Mono', monospace;font-size:16.8px;line-height:16.8px;color:#eef1f7;font-weight:400;transform:scaleY(1.3);transform-origin:0 12.87px;-webkit-text-stroke:0.2px #eef1f7;">Node-2…</div>
<div class="t" style="left:1105.88px;top:715.63px;font-family:'Liberation Mono', monospace;font-size:16.8px;line-height:16.8px;color:#eef1f7;font-weight:400;transform:scaleY(1.3);transform-origin:0 12.87px;-webkit-text-stroke:0.2px #eef1f7;">0.8s</div>
<div class="t" style="left:1227.54px;top:715.63px;font-family:'Liberation Mono', monospace;font-size:16.8px;line-height:16.8px;color:#eef1f7;font-weight:400;transform:scaleY(1.3);transform-origin:0 12.87px;-webkit-text-stroke:0.2px #eef1f7;">11:04:29…</div>
<div class="t" style="left:314.86px;top:765.13px;font-family:'Liberation Mono', monospace;font-size:16.8px;line-height:16.8px;color:#3fbfa4;font-weight:400;transform:scaleY(1.3);transform-origin:0 12.87px;-webkit-text-stroke:0.2px #3fbfa4;">#8710</div>
<div class="t" style="left:427.63px;top:765.13px;font-family:'Liberation Mono', monospace;font-size:16.8px;line-height:16.8px;color:#eef1f7;font-weight:400;transform:scaleY(1.3);transform-origin:0 12.87px;-webkit-text-stroke:0.2px #eef1f7;">process_data</div>
<div class="t" style="left:682.79px;top:765.13px;font-family:'Liberation Mono', monospace;font-size:16.8px;line-height:16.8px;color:#eef1f7;font-weight:400;transform:scaleY(1.3);transform-origin:0 12.87px;-webkit-text-stroke:0.2px #eef1f7;">mailer</div>
<div class="b" style="left:815.00px;top:756.20px;width:105.80px;height:29.60px;background:#1c64a8;border-radius:7px;"></div>
<div class="t" style="left:823.15px;top:765.13px;font-family:'Liberation Mono', monospace;font-size:16.8px;line-height:16.8px;color:#e8f2ff;font-weight:400;transform:scaleY(1.3);transform-origin:0 12.87px;-webkit-text-stroke:0.2px #e8f2ff;">Scheduled</div>
<div class="t" style="left:975.87px;top:765.13px;font-family:'Liberation Mono', monospace;font-size:16.8px;line-height:16.8px;color:#eef1f7;font-weight:400;transform:scaleY(1.3);transform-origin:0 12.87px;-webkit-text-stroke:0.2px #eef1f7;">Node-1</div>
<div class="t" style="left:1105.88px;top:765.13px;font-family:'Liberation Mono', monospace;font-size:16.8px;line-height:16.8px;color:#eef1f7;font-weight:400;transform:scaleY(1.3);transform-origin:0 12.87px;-webkit-text-stroke:0.2px #eef1f7;">0.8s</div>
<div class="t" style="left:1227.54px;top:765.13px;font-family:'Liberation Mono', monospace;font-size:16.8px;line-height:16.8px;color:#eef1f7;font-weight:400;transform:scaleY(1.3);transform-origin:0 12.87px;-webkit-text-stroke:0.2px #eef1f7;">11:04:29</div>
</body></html>
